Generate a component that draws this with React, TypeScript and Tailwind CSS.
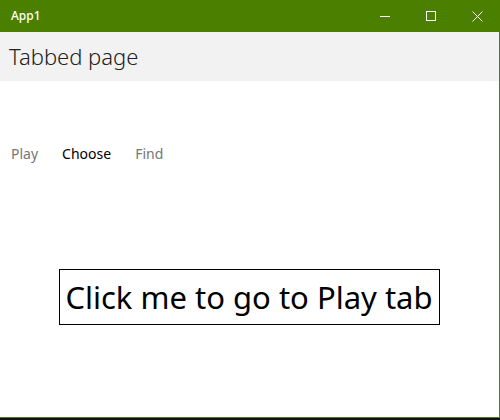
import React from "react";

const font = { fontFamily: '"Noto Sans", "Open Sans", sans-serif' };

function TitleBar() {
  return (
    <div className="h-[32px] bg-[#4a7f00] flex items-center text-white shrink-0">
      <div className="pl-[11px] text-[12px] font-medium flex-1" style={font}>
        App1
      </div>
      <div className="flex h-full">
        <div className="w-[46px] h-full flex items-center justify-center">
          <svg width="10" height="10" viewBox="0 0 10 10">
            <path d="M0 5.5H10" stroke="white" strokeWidth="1" />
          </svg>
        </div>
        <div className="w-[46px] h-full flex items-center justify-center">
          <svg width="10" height="10" viewBox="0 0 10 10">
            <rect x="0.5" y="0.5" width="9" height="9" fill="none" stroke="white" strokeWidth="1" />
          </svg>
        </div>
        <div className="w-[46px] h-full flex items-center justify-center">
          <svg width="11" height="11" viewBox="0 0 11 11">
            <path d="M0.5 0.5L10.5 10.5M10.5 0.5L0.5 10.5" stroke="white" strokeWidth="1" />
          </svg>
        </div>
      </div>
    </div>
  );
}

export default function App() {
  return (
    <div className="w-[500px] h-[420px] flex flex-col bg-[#111] overflow-hidden" style={font}>
      <TitleBar />
      <div className="flex-1 flex flex-col bg-white border-r border-b border-[#4f7a2a]">
        <div className="h-[49px] bg-[#f2f2f2] flex items-center pl-[9px] text-[22px] font-light text-[#222]">
          Tabbed page
        </div>
        <div className="flex gap-[24px] pl-[11px] mt-[62px] text-[14px]">
          <span className="text-[#767676]">Play</span>
          <span className="text-black">Choose</span>
          <span className="text-[#767676]">Find</span>
        </div>
        <div className="flex justify-center mt-[105px] pr-[1px]">
          <div className="w-[381px] h-[56px] border border-black flex items-center justify-center text-[31px] text-black">
            Click me to go to Play tab
          </div>
        </div>
      </div>
      <div className="h-[2px] shrink-0" />
    </div>
  );
}
